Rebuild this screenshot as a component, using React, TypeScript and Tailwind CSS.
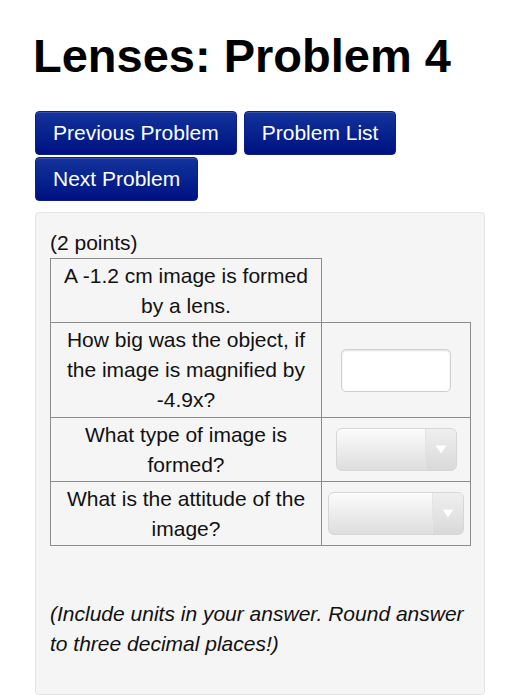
import React from "react";

const font = { fontFamily: '"Liberation Sans", Arial, Helvetica, sans-serif' };

function NavButton({ label }: { label: string }) {
  return (
    <button className="h-[44px] px-[17px] rounded-[4px] border border-[#0b1f86] bg-gradient-to-b from-[#15339b] to-[#000f82] text-white text-[21px] leading-[24px] shadow-[inset_0_1px_0_rgba(255,255,255,0.15)]">
      {label}
    </button>
  );
}

function Dropdown({ width }: { width: string }) {
  return (
    <div
      className={`${width} h-[43px] flex rounded-[6px] border border-[#d6d6d6] bg-gradient-to-b from-[#fcfcfc] to-[#dddddd] overflow-hidden`}
    >
      <div className="flex-1" />
      <div className="w-[31px] flex items-center justify-center bg-gradient-to-b from-[#efefef] to-[#d9d9d9] border-l border-[#e4e4e4]">
        <svg width="12" height="9" viewBox="0 0 12 9">
          <path d="M0.5 0.5 L11.5 0.5 L6 8.5 Z" fill="#ffffff" />
        </svg>
      </div>
    </div>
  );
}

export default function App() {
  return (
    <div className="bg-white min-h-[700px] pl-[35px] pt-[29px]" style={font}>
      <div className="w-[450px]">
        <h1 className="-ml-[2px] text-[47px] leading-[54px] font-bold text-black">
          Lenses: Problem 4
        </h1>

        <div className="mt-[28px] flex flex-wrap gap-x-[7px] gap-y-[2px]">
          <NavButton label="Previous Problem" />
          <NavButton label="Problem List" />
          <NavButton label="Next Problem" />
        </div>

        <div className="mt-[11px] border border-[#e3e3e3] bg-[#f5f5f5] rounded-[4px] px-[14px] pt-[15px] pb-[35px] text-[21px] leading-[30px] text-[#111]">
          <p>(2 points)</p>

          <div className="grid grid-cols-[272px_149px]">
            <div className="border border-[#8c8c8c] pt-[2px] pb-px px-[6px] text-center">
              A -1.2 cm image is formed by a lens.
            </div>
            <div className="border-b border-[#8c8c8c]" />

            <div className="border-x border-b border-[#8c8c8c] pt-[2px] pb-[2px] px-[6px] text-center">
              How big was the object, if the image is magnified by -4.9x?
            </div>
            <div className="border-r border-b border-[#8c8c8c] flex items-center justify-center">
              <input
                type="text"
                className="w-[110px] h-[43px] bg-white rounded-[5px] border border-[#cfcfcf] shadow-[inset_0_1px_2px_rgba(0,0,0,0.12)] outline-none"
              />
            </div>

            <div className="border-x border-b border-[#8c8c8c] pt-[2px] pb-px px-[6px] text-center">
              What type of image is formed?
            </div>
            <div className="border-r border-b border-[#8c8c8c] flex items-center justify-center">
              <Dropdown width="w-[121px]" />
            </div>

            <div className="border-x border-b border-[#8c8c8c] pt-[2px] pb-px px-[6px] text-center">
              What is the attitude of the image?
            </div>
            <div className="border-r border-b border-[#8c8c8c] flex items-center justify-center">
              <Dropdown width="w-[136px]" />
            </div>
          </div>

          <p className="mt-[53px] italic">
            (Include units in your answer. Round answer to three decimal places!)
          </p>
        </div>
      </div>
    </div>
  );
}
